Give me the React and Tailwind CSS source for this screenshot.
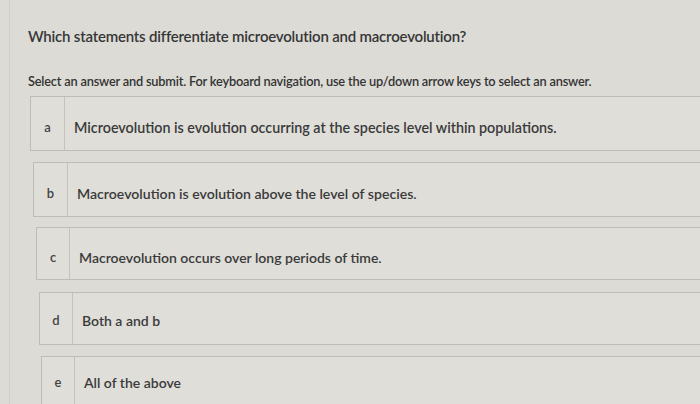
const options = [
  { key: "a", text: "Microevolution is evolution occurring at the species level within populations.", row: "ml-[2px] mt-[7px] h-[55px]", letter: "w-[34px]", size: "text-[14.3px]", pad: "pt-[8px]" },
  { key: "b", text: "Macroevolution is evolution above the level of species.", row: "ml-[5px] mt-[11px] h-[55px]", letter: "w-[34px]", size: "text-[14.1px]", pad: "pt-[8px]" },
  { key: "c", text: "Macroevolution occurs over long periods of time.", row: "ml-[8px] mt-[10px] h-[53px]", letter: "w-[33px]", size: "text-[14px]", pad: "pt-[8px]" },
  { key: "d", text: "Both a and b", row: "ml-[11px] mt-[12px] h-[53px]", letter: "w-[33px]", size: "text-[14px]", pad: "pt-[4px]" },
  { key: "e", text: "All of the above", row: "ml-[13px] mt-[11px] h-[53px]", letter: "w-[33px]", size: "text-[14px]", pad: "pt-0" },
];

function App() {
  return (
    <div
      className="w-[700px] h-[404px] overflow-hidden bg-[#dcdbd6] text-[#363636]"
      style={{ fontFamily: "Lato, 'Open Sans', sans-serif" }}
    >
      <div className="ml-[9px] h-full border-l border-[#cfcec9] pl-[18px] pt-[26px]">
        <h1 className="text-[15px] font-semibold leading-[20px] tracking-[-0.2px]">
          Which statements differentiate microevolution and macroevolution?
        </h1>
        <p className="mt-[27px] text-[12.8px] font-semibold leading-[16px] tracking-[-0.2px] text-[#333]">
          Select an answer and submit. For keyboard navigation, use the up/down arrow keys to select an answer.
        </p>
        {options.map((o) => (
          <div
            key={o.key}
            className={`flex items-center w-[720px] border border-r-0 border-[#bdbcb7] bg-[#dfded9] ${o.row}`}
          >
            <div
              className={`flex h-full items-center justify-center border-r border-[#c3c2bd] text-[13px] font-semibold text-[#444] ${o.letter} ${o.pad}`}
            >
              {o.key}
            </div>
            <div className={`pl-[9px] font-semibold text-[#3a3a3a] ${o.size} ${o.pad}`}>{o.text}</div>
          </div>
        ))}
      </div>
    </div>
  );
}

export default App;
